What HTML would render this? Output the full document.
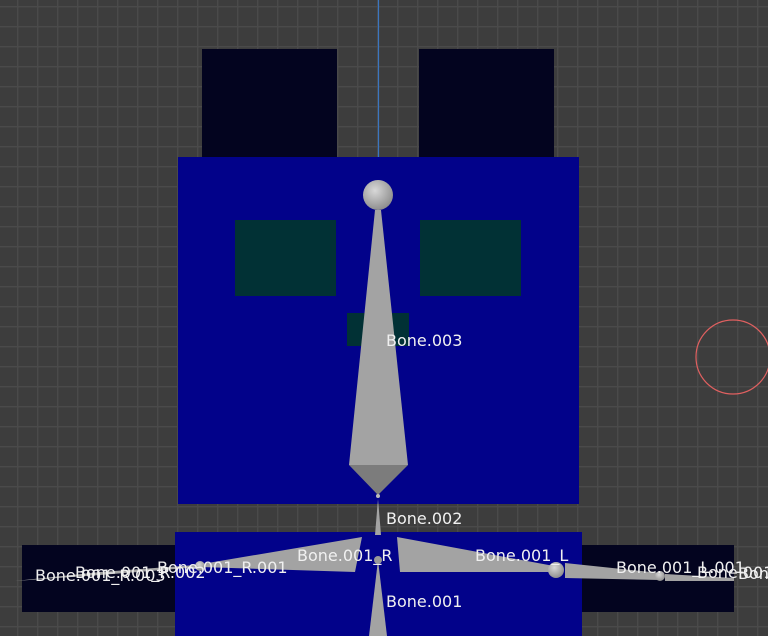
<!DOCTYPE html>
<html><head><style>
html,body{margin:0;padding:0;background:#3d3d3d;width:768px;height:636px;overflow:hidden}
svg{display:block}
text{font-family:"DejaVu Sans","Liberation Sans",sans-serif;font-size:16px;fill:#f0f0f0}
</style></head><body>
<svg width="768" height="636" viewBox="0 0 768 636" xmlns="http://www.w3.org/2000/svg">
<defs>
<pattern id="g" x="-3" y="6" width="20" height="20" patternUnits="userSpaceOnUse">
<rect width="20" height="20" fill="#3d3d3d"/>
<rect x="0" y="0" width="20" height="1.4" fill="#4a4a4a"/>
<rect x="0" y="0" width="1.4" height="20" fill="#4a4a4a"/>
</pattern>
<radialGradient id="s" cx="0.4" cy="0.35" r="0.7">
<stop offset="0" stop-color="#d8d8d8"/><stop offset="1" stop-color="#8a8a8a"/>
</radialGradient>
</defs>
<rect width="768" height="636" fill="url(#g)"/>
<line x1="378.5" y1="0" x2="378.5" y2="157" stroke="#3b76c0" stroke-width="1.2"/>
<rect x="202" y="49" width="135" height="108" fill="#03041f"/>
<rect x="419" y="49" width="135" height="108" fill="#03041f"/>
<rect x="178" y="157" width="401" height="347" fill="#02028a"/>
<rect x="235" y="220" width="101" height="76" fill="#013135"/>
<rect x="420" y="220" width="101" height="76" fill="#013135"/>
<rect x="347" y="313" width="62" height="33" fill="#013135"/>
<rect x="22" y="545" width="153" height="67" fill="#03041f"/>
<rect x="582" y="545" width="152" height="67" fill="#03041f"/>
<rect x="175" y="532" width="407" height="104" fill="#02028a"/>
<circle cx="733" cy="357" r="37" fill="none" stroke="#e06060" stroke-width="1.2"/>
<polygon points="375,210 381,210 408,465 349,465" fill="#a3a3a3"/>
<polygon points="349,465 408,465 378,495" fill="#7c7c7c"/>
<circle cx="378" cy="195" r="15" fill="url(#s)"/>
<circle cx="378" cy="496" r="2" fill="#bbb"/>
<polygon points="378,499 381,535 375,535" fill="#a3a3a3"/>
<polygon points="378,560 387,636 369,636" fill="#a3a3a3"/>
<polygon points="362,537 355,572 200,567 196,565" fill="#a3a3a3"/>
<polygon points="196,565 200,567 100,575 15,581 100,572" fill="#a3a3a3"/>
<circle cx="200" cy="566" r="5" fill="url(#s)"/>
<polygon points="397,537 400,572 556,572 554,566" fill="#a3a3a3"/>
<circle cx="556" cy="570" r="8" fill="url(#s)"/>
<polygon points="565,563 565,578 660,580 660,573" fill="#a3a3a3"/>
<circle cx="660" cy="576" r="5" fill="url(#s)"/>
<polygon points="665,574 665,581 734,581 734,578" fill="#a3a3a3"/>
<circle cx="378" cy="560" r="4" fill="#999"/>
<text x="386" y="346">Bone.003</text>
<text x="386" y="524">Bone.002</text>
<text x="297" y="561">Bone.001_R</text>
<text x="475" y="561">Bone.001_L</text>
<text x="157" y="573">Bone.001_R.001</text>
<text x="75" y="578">Bone.001_R.002</text>
<text x="35" y="581">Bone.001_R.003</text>
<text x="386" y="607">Bone.001</text>
<text x="616" y="573">Bone.001_L.001</text>
<text x="697" y="578">Bone.001_L.002</text>
<text x="738" y="579">Bone.001_L.003</text>
</svg>
</body></html>
